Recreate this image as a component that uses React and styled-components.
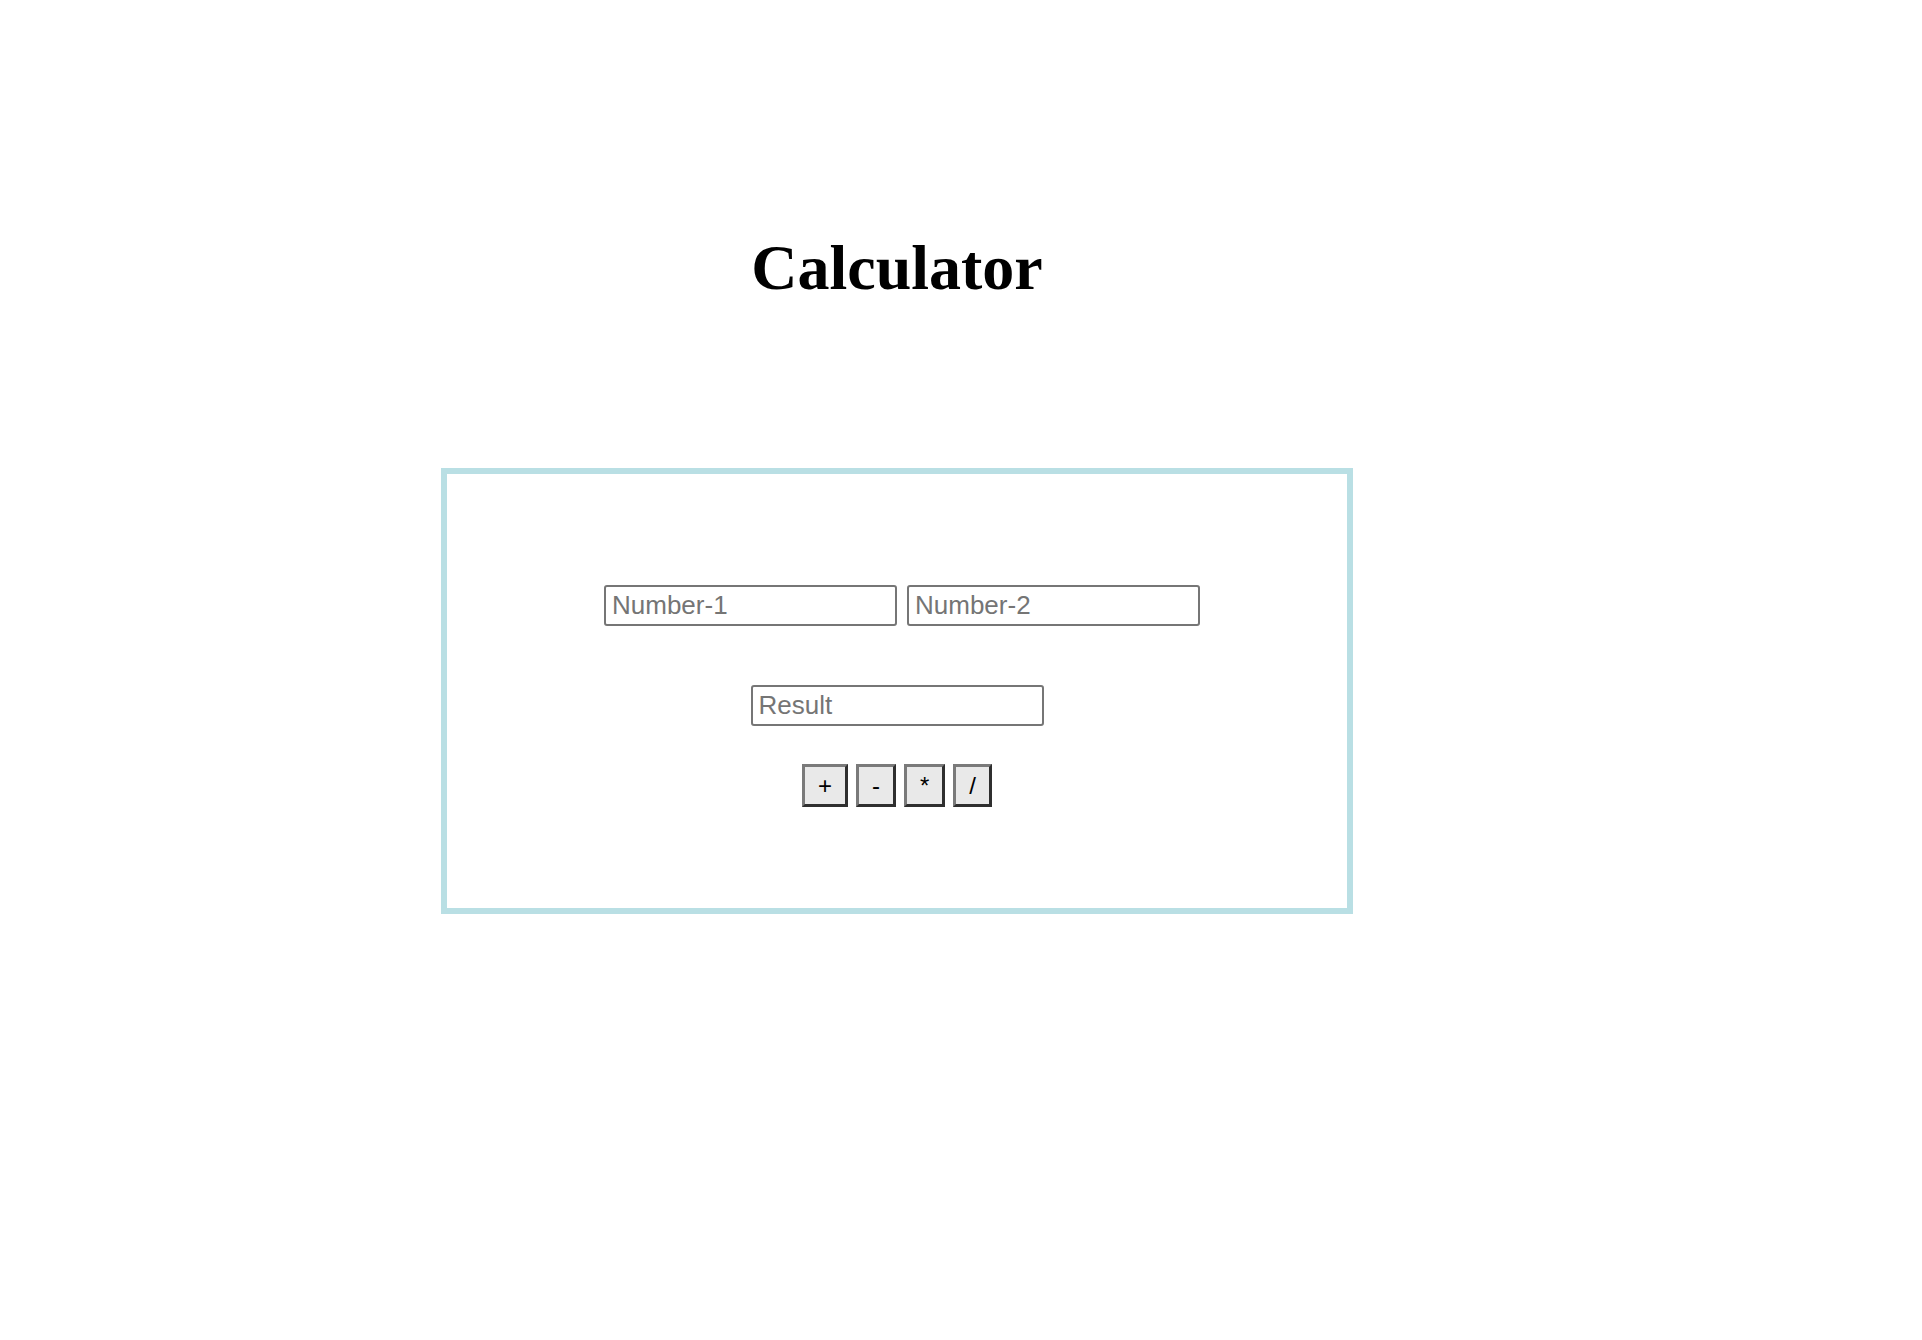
import styled, { createGlobalStyle } from "styled-components";

const GlobalStyle = createGlobalStyle`
  body {
    margin: 0;
    background: #ffffff;
  }
`;

const Page = styled.div`
  width: 912px;
  margin-left: 441px;
  padding-top: 236px;
`;

const Title = styled.h1`
  margin: 0;
  font-family: "Liberation Serif", "Times New Roman", serif;
  font-weight: bold;
  font-size: 64px;
  line-height: 64px;
  text-align: center;
  color: #000;
`;

const Card = styled.div`
  margin-top: 168px;
  box-sizing: border-box;
  height: 446px;
  border: 6px solid #b9dfe4;
  padding-top: 111px;
  display: flex;
  flex-direction: column;
  align-items: center;
`;

const Row = styled.div`
  display: flex;
  justify-content: center;
  gap: ${(props) => props.gap || 10}px;
  padding-left: ${(props) => props.shift || 0}px;
  margin-bottom: ${(props) => props.spacing || 0}px;
`;

const Field = styled.input`
  box-sizing: border-box;
  width: 293px;
  height: 41px;
  padding: 0 6px;
  border: 2px solid #767676;
  border-radius: 3px;
  font-family: "Liberation Sans", Arial, sans-serif;
  font-size: 26px;
  color: #000;
  background: #fff;
  outline: none;

  &::placeholder {
    color: #757575;
  }
`;

const OpButton = styled.button`
  box-sizing: border-box;
  height: 43px;
  padding: 0 13px;
  border-width: 3px;
  border-style: solid;
  border-color: #7a7a7a #2f2f2f #2f2f2f #7a7a7a;
  border-radius: 0;
  background: #e9e9e9;
  font-family: "Liberation Sans", Arial, sans-serif;
  font-size: 24px;
  line-height: 1;
  color: #000;
  cursor: pointer;
`;

const ops = ["+", "-", "*", "/"];

export default function App() {
  return (
    <>
      <GlobalStyle />
      <Page>
        <Title>Calculator</Title>
        <Card>
          <Row gap={10} shift={10} spacing={59}>
            <Field type="text" placeholder="Number-1" />
            <Field type="text" placeholder="Number-2" />
          </Row>
          <Row spacing={38}>
            <Field type="text" placeholder="Result" readOnly />
          </Row>
          <Row gap={8}>
            {ops.map((op) => (
              <OpButton key={op}>{op}</OpButton>
            ))}
          </Row>
        </Card>
      </Page>
    </>
  );
}
